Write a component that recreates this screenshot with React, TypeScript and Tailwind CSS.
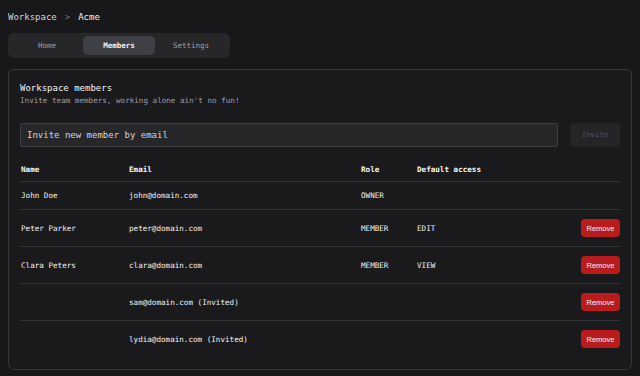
const members = [
  { name: "John Doe", email: "john@domain.com", role: "OWNER", access: "", removable: false },
  { name: "Peter Parker", email: "peter@domain.com", role: "MEMBER", access: "EDIT", removable: true },
  { name: "Clara Peters", email: "clara@domain.com", role: "MEMBER", access: "VIEW", removable: true },
  { name: "", email: "sam@domain.com (Invited)", role: "", access: "", removable: true },
  { name: "", email: "lydia@domain.com (Invited)", role: "", access: "", removable: true },
];

const tabs = ["Home", "Members", "Settings"];

export default function App() {
  return (
    <main
      className="min-h-[376px] w-[640px] bg-[#18181b] px-2 text-zinc-200"
      style={{ fontFamily: '"DejaVu Sans Mono", "Liberation Mono", monospace' }}
    >
      {/* Breadcrumb */}
      <div className="flex h-[33px] items-center gap-[8px] pt-px text-[9px] leading-none">
        <span className="text-zinc-300">Workspace</span>
        <span className="text-zinc-500">&gt;</span>
        <span className="text-zinc-100">Acme</span>
      </div>

      {/* Tabs */}
      <div className="flex w-[222px] rounded-md bg-[#27272a] p-[3px]">
        {tabs.map((t) => (
          <div
            key={t}
            className={
              t === "Members"
                ? "flex h-[19px] w-[72px] items-center justify-center rounded-[5px] bg-[#3f3f46] text-[7.5px] font-bold text-zinc-100"
                : "flex h-[19px] w-[72px] items-center justify-center text-[7.5px] text-zinc-400"
            }
          >
            {t}
          </div>
        ))}
      </div>

      {/* Card */}
      <div className="mt-[11px] rounded-md border border-[#37373c] bg-[#1a1a1d] px-[11px] pt-[12px] pb-[12px]">
        <h2 className="text-[9px] leading-[12px] text-zinc-100">Workspace members</h2>
        <p className="mt-px text-[7.6px] leading-[12px] text-zinc-400">
          Invite team members, working alone ain't no fun!
        </p>

        <div className="mt-[16px] flex gap-[12px]">
          <input
            className="h-[24px] flex-1 rounded-[2px] border border-[#3f3f46] bg-[#27272a] px-[6px] text-[9px] text-zinc-200 outline-none placeholder:text-zinc-300"
            placeholder="Invite new member by email"
          />
          <button
            disabled
            className="h-[24px] w-[50px] rounded-[4px] bg-[#252528] text-[7.3px] text-zinc-600"
          >
            Invite
          </button>
        </div>

        <table className="mt-[12px] w-full border-collapse text-left text-[7.6px] leading-[9px]">
          <thead>
            <tr className="border-b border-[#333337]">
              <th className="w-[109px] pt-[6px] pb-[7px] pl-px font-bold text-zinc-50">Name</th>
              <th className="w-[232px] pt-[6px] pb-[7px] font-bold text-zinc-50">Email</th>
              <th className="w-[56px] pt-[6px] pb-[7px] font-bold text-zinc-50">Role</th>
              <th className="pt-[6px] pb-[7px] font-bold text-zinc-50">Default access</th>
              <th />
            </tr>
          </thead>
          <tbody>
            {members.map((m, i) => (
              <tr
                key={m.email}
                className={i < members.length - 1 ? "border-b border-[#333337]" : ""}
              >
                <td className="py-[9px] pl-px text-zinc-100">{m.name}</td>
                <td className="py-[9px] text-zinc-100">{m.email}</td>
                <td className="py-[9px] text-zinc-100">{m.role}</td>
                <td className="py-[9px] text-zinc-100">{m.access}</td>
                <td className="py-[9px] text-right">
                  {m.removable && (
                    <button
                      className="h-[18px] w-[39px] rounded-[4px] bg-[#b91c1c] align-middle text-[7.5px] text-zinc-100"
                      style={{ fontFamily: '"Liberation Sans", Arial, sans-serif' }}
                    >
                      Remove
                    </button>
                  )}
                </td>
              </tr>
            ))}
          </tbody>
        </table>
      </div>
    </main>
  );
}
